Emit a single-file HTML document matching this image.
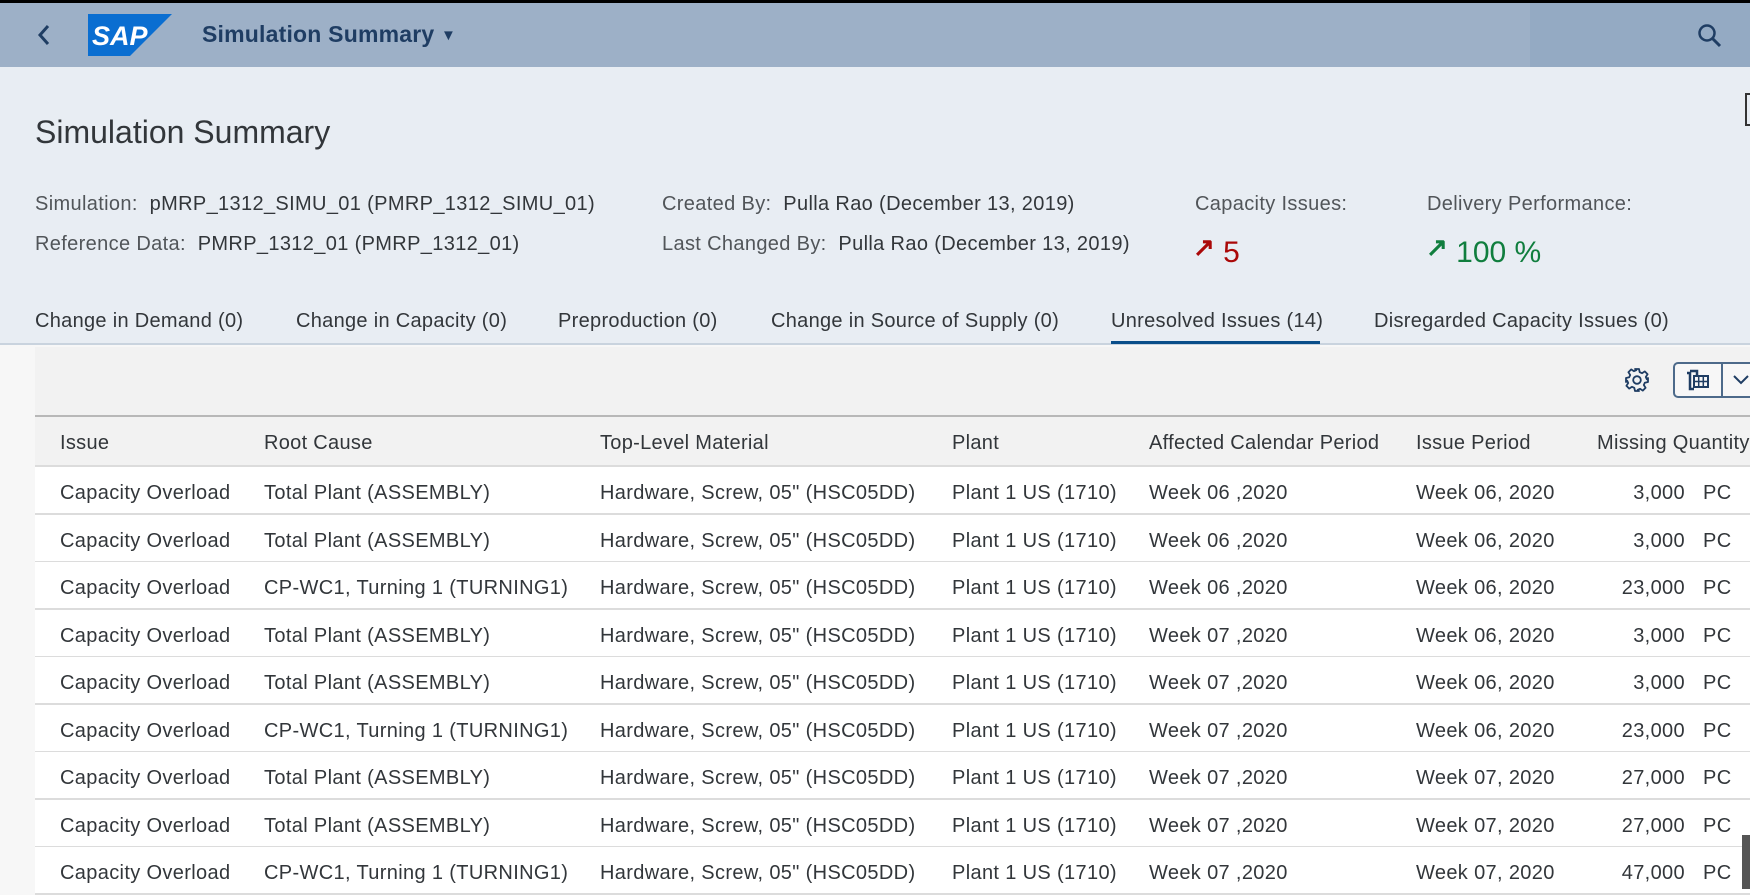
<!DOCTYPE html>
<html><head><meta charset="utf-8"><style>
*{margin:0;padding:0;box-sizing:border-box}
body{width:1750px;height:889px;overflow:hidden;font-family:"Liberation Sans",Arial,sans-serif;color:#32363a;background:#f7f7f7;position:relative}
.abs{position:absolute;white-space:nowrap}
#shell{position:absolute;left:0;top:0;width:1750px;height:67px;background:#9db0c7;border-top:3px solid #000}
#shell .r{position:absolute;left:1530px;top:0;width:220px;height:64px;background:#94aac3}
#hdr{position:absolute;left:0;top:67px;width:1750px;height:278px;background:#e8edf3;border-bottom:2px solid #c9d3de}
.lbl{font-size:20px;letter-spacing:0.35px;color:#32363a}
.tab{font-size:20px;letter-spacing:0.3px;top:310px;color:#32363a}
#tbl{position:absolute;left:35px;top:347px;width:1715px;height:542px;background:#f2f2f2}
.row{position:absolute;left:35px;width:1715px;height:48px;background:#fff;border-bottom:2px solid #dcdcdc;font-size:20px;letter-spacing:0.35px}
.row span,.hd span{position:absolute;top:15px;white-space:nowrap}
.hd{position:absolute;left:35px;top:415px;width:1715px;height:52px;background:#f2f2f2;border-top:2px solid #b8b8b8;border-bottom:2px solid #dcdcdc;font-size:20px;letter-spacing:0.3px}
</style></head><body>
<div id="shell"><div class="r"></div>
<svg class="abs" style="left:36px;top:20px" width="16" height="24" viewBox="0 0 16 24"><path d="M12 3 L4 12 L12 21" stroke="#1f3d63" stroke-width="3" fill="none"/></svg>
<svg class="abs" style="left:88px;top:11px" width="84" height="42" viewBox="0 0 84 42"><polygon points="0,0 84,0 42,42 0,42" fill="#0a6ed1"/><text x="4" y="31" font-family="Liberation Sans" font-weight="bold" font-style="italic" font-size="27" fill="#fff">SAP</text></svg>
<div class="abs" style="left:202px;top:18px;font-size:23px;font-weight:bold;color:#1f3d63;letter-spacing:0.2px">Simulation Summary <span style="font-size:15px;position:relative;top:-2px">▼</span></div>
<svg class="abs" style="left:1697px;top:20px" width="26" height="26" viewBox="0 0 26 26"><circle cx="10" cy="10" r="7.5" stroke="#1f3d63" stroke-width="2.5" fill="none"/><path d="M15.5 15.5 L23 23" stroke="#1f3d63" stroke-width="3"/></svg>
</div>
<div id="hdr"></div>
<div class="abs" style="left:35px;top:114px;font-size:32px;color:#32363a">Simulation Summary</div>
<div class="abs lbl" style="left:35px;top:193px"><span style="color:#515559">Simulation:</span>&nbsp; pMRP_1312_SIMU_01 (PMRP_1312_SIMU_01)</div>
<div class="abs lbl" style="left:35px;top:233px"><span style="color:#515559">Reference Data:</span>&nbsp; PMRP_1312_01 (PMRP_1312_01)</div>
<div class="abs lbl" style="left:662px;top:193px"><span style="color:#515559">Created By:</span>&nbsp; Pulla Rao (December 13, 2019)</div>
<div class="abs lbl" style="left:662px;top:233px"><span style="color:#515559">Last Changed By:</span>&nbsp; Pulla Rao (December 13, 2019)</div>
<div class="abs lbl" style="left:1195px;top:193px;color:#515559">Capacity Issues:</div>
<div class="abs lbl" style="left:1427px;top:193px;color:#515559">Delivery Performance:</div>
<div class="abs" style="left:1193px;top:236px;font-size:30px;color:#aa0808"><span style="font-size:26px;font-weight:bold;position:relative;top:-6px">↗</span>&nbsp;5</div>
<div class="abs" style="left:1426px;top:236px;font-size:30px;color:#107e3e"><span style="font-size:26px;font-weight:bold;position:relative;top:-6px">↗</span>&nbsp;100 %</div>
<div class="abs tab" style="left:35px">Change in Demand (0)</div>
<div class="abs tab" style="left:296px">Change in Capacity (0)</div>
<div class="abs tab" style="left:558px">Preproduction (0)</div>
<div class="abs tab" style="left:771px">Change in Source of Supply (0)</div>
<div class="abs tab" style="left:1111px">Unresolved Issues (14)</div>
<div class="abs tab" style="left:1374px">Disregarded Capacity Issues (0)</div>
<div class="abs" style="left:1111px;top:341px;width:209px;height:3px;background:#0a4e8a"></div>
<div id="tbl"></div>
<svg class="abs" style="left:1624px;top:367px" width="26" height="26" viewBox="0 0 26 26"><path d="M11 2h4l.7 3.2 2.3 1 2.8-1.8 2.8 2.8-1.8 2.8 1 2.3L24 11v4l-3.2.7-1 2.3 1.8 2.8-2.8 2.8-2.8-1.8-2.3 1L15 24h-4l-.7-3.2-2.3-1-2.8 1.8-2.8-2.8 1.8-2.8-1-2.3L2 15v-4l3.2-.7 1-2.3-1.8-2.8 2.8-2.8 2.8 1.8 2.3-1z" stroke="#1f3d63" stroke-width="1.8" fill="none" stroke-linejoin="round"/><circle cx="13" cy="13" r="3.8" stroke="#1f3d63" stroke-width="1.8" fill="none"/></svg>
<div class="abs" style="left:1673px;top:362px;width:90px;height:36px;border:2px solid #4d6a8a;border-radius:5px;background:#f7f7f7"></div>
<div class="abs" style="left:1721px;top:362px;width:2px;height:36px;background:#4d6a8a"></div>
<svg class="abs" style="left:1683px;top:368px" width="28" height="24" viewBox="0 0 28 24"><path d="M4 5h3v16h4 M7 3h7v4" stroke="#1f3d63" stroke-width="2.5" fill="none"/><rect x="11" y="8" width="14" height="11" fill="none" stroke="#1f3d63" stroke-width="2"/><path d="M11 13.5h14M15.7 8v11M20.3 8v11" stroke="#1f3d63" stroke-width="1.5"/></svg>
<svg class="abs" style="left:1733px;top:375px" width="16" height="10" viewBox="0 0 16 10"><path d="M1 1l7 7 7-7" stroke="#1f3d63" stroke-width="2" fill="none"/></svg>
<div class="hd"><span style="left:25px">Issue</span><span style="left:229px">Root Cause</span><span style="left:565px">Top-Level Material</span><span style="left:917px">Plant</span><span style="left:1114px">Affected Calendar Period</span><span style="left:1381px">Issue Period</span><span style="left:1562px">Missing Quantity</span></div>
<div id="rows"></div>
<script>
var d=[["Total Plant (ASSEMBLY)","06","06","3,000"],["Total Plant (ASSEMBLY)","06","06","3,000"],["CP-WC1, Turning 1 (TURNING1)","06","06","23,000"],["Total Plant (ASSEMBLY)","07","06","3,000"],["Total Plant (ASSEMBLY)","07","06","3,000"],["CP-WC1, Turning 1 (TURNING1)","07","06","23,000"],["Total Plant (ASSEMBLY)","07","07","27,000"],["Total Plant (ASSEMBLY)","07","07","27,000"],["CP-WC1, Turning 1 (TURNING1)","07","07","47,000"]];
var h="";d.forEach(function(r,i){var t=467+i*47.5;h+='<div class="row" style="top:'+t+'px"><span style="left:25px">Capacity Overload</span><span style="left:229px">'+r[0]+'</span><span style="left:565px">Hardware, Screw, 05" (HSC05DD)</span><span style="left:917px">Plant 1 US (1710)</span><span style="left:1114px">Week '+r[1]+' ,2020</span><span style="left:1381px">Week '+r[2]+', 2020</span><span style="right:65px">'+r[3]+'</span><span style="left:1668px">PC</span></div>';});
document.getElementById("rows").innerHTML=h;
</script>
<div class="abs" style="left:1742px;top:835px;width:8px;height:54px;background:#555"></div>
<div class="abs" style="left:1745px;top:93px;width:5px;height:33px;border:2px solid #333;border-right:none"></div>
</body></html>
